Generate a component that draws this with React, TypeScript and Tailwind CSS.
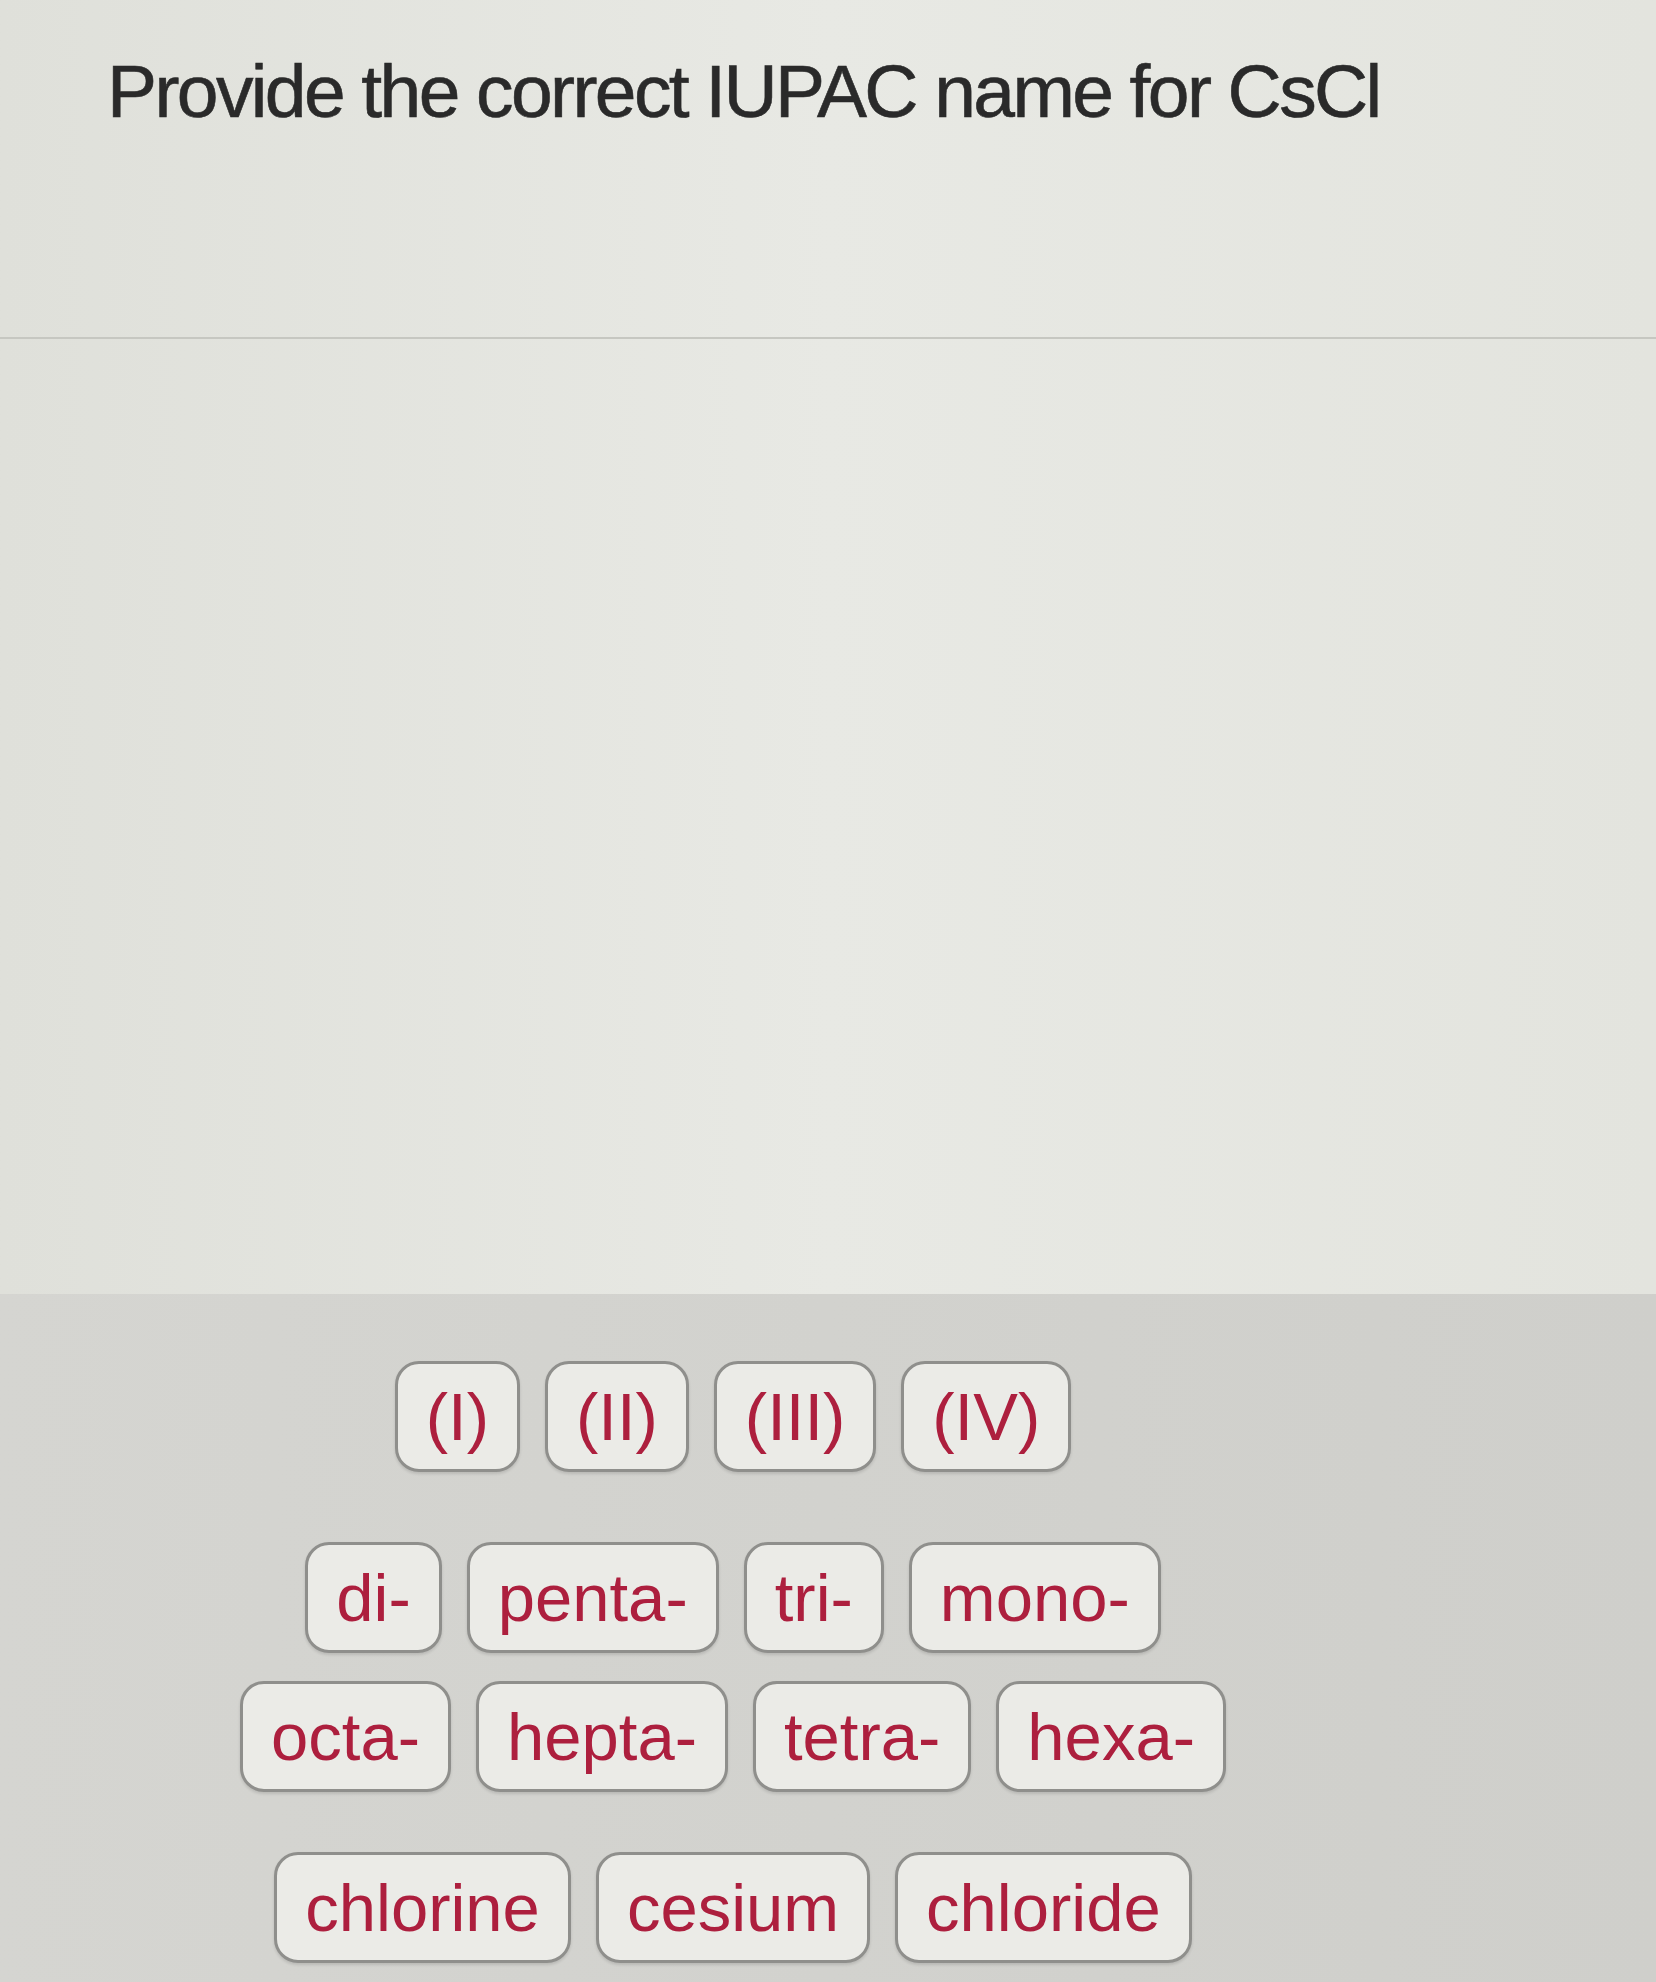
const romans = ["(I)", "(II)", "(III)", "(IV)"];
const prefixesA = ["di-", "penta-", "tri-", "mono-"];
const prefixesB = ["octa-", "hepta-", "tetra-", "hexa-"];
const names = ["chlorine", "cesium", "chloride"];

function Tile({ label }: { label: string }) {
  return (
    <button className="rounded-[24px] border-[3px] border-[#8f8f8c] bg-[#ebebe7] px-[28px] py-[19px] text-[67px] leading-none text-[#ad1f3e] shadow-[0_2px_3px_rgba(0,0,0,0.12)]">
      {label}
    </button>
  );
}

function Row({ items, className = "" }: { items: string[]; className?: string }) {
  return (
    <div className={`flex justify-center gap-[25px] ${className}`}>
      {items.map((t) => (
        <Tile key={t} label={t} />
      ))}
    </div>
  );
}

export default function App() {
  return (
    <div className="flex min-h-[1982px] flex-col bg-gradient-to-r from-[#dfe0da] via-[#e8e9e4] to-[#e3e4de] font-['Liberation_Sans',Arial,sans-serif]">
      {/* Question */}
      <div className="h-[339px] border-b-2 border-[#c6c7c1] pl-[107px] pt-[54px]">
        <h1 className="text-[75px] leading-none tracking-[-2.6px] text-[#2a2a2a] [-webkit-text-stroke:0.6px_#2a2a2a]">
          Provide the correct IUPAC name for CsCl
        </h1>
      </div>

      {/* Answer area */}
      <div className="h-[955px]" />

      {/* Tile bank */}
      <div className="flex-1 bg-gradient-to-r from-[#d5d5d1] to-[#cfcfcb] pt-[67px]">
        <div className="flex w-[1466px] flex-col">
          <Row items={romans} />
          <Row items={prefixesA} className="mt-[70px]" />
          <Row items={prefixesB} className="mt-[28px]" />
          <Row items={names} className="mt-[60px]" />
        </div>
      </div>
    </div>
  );
}
